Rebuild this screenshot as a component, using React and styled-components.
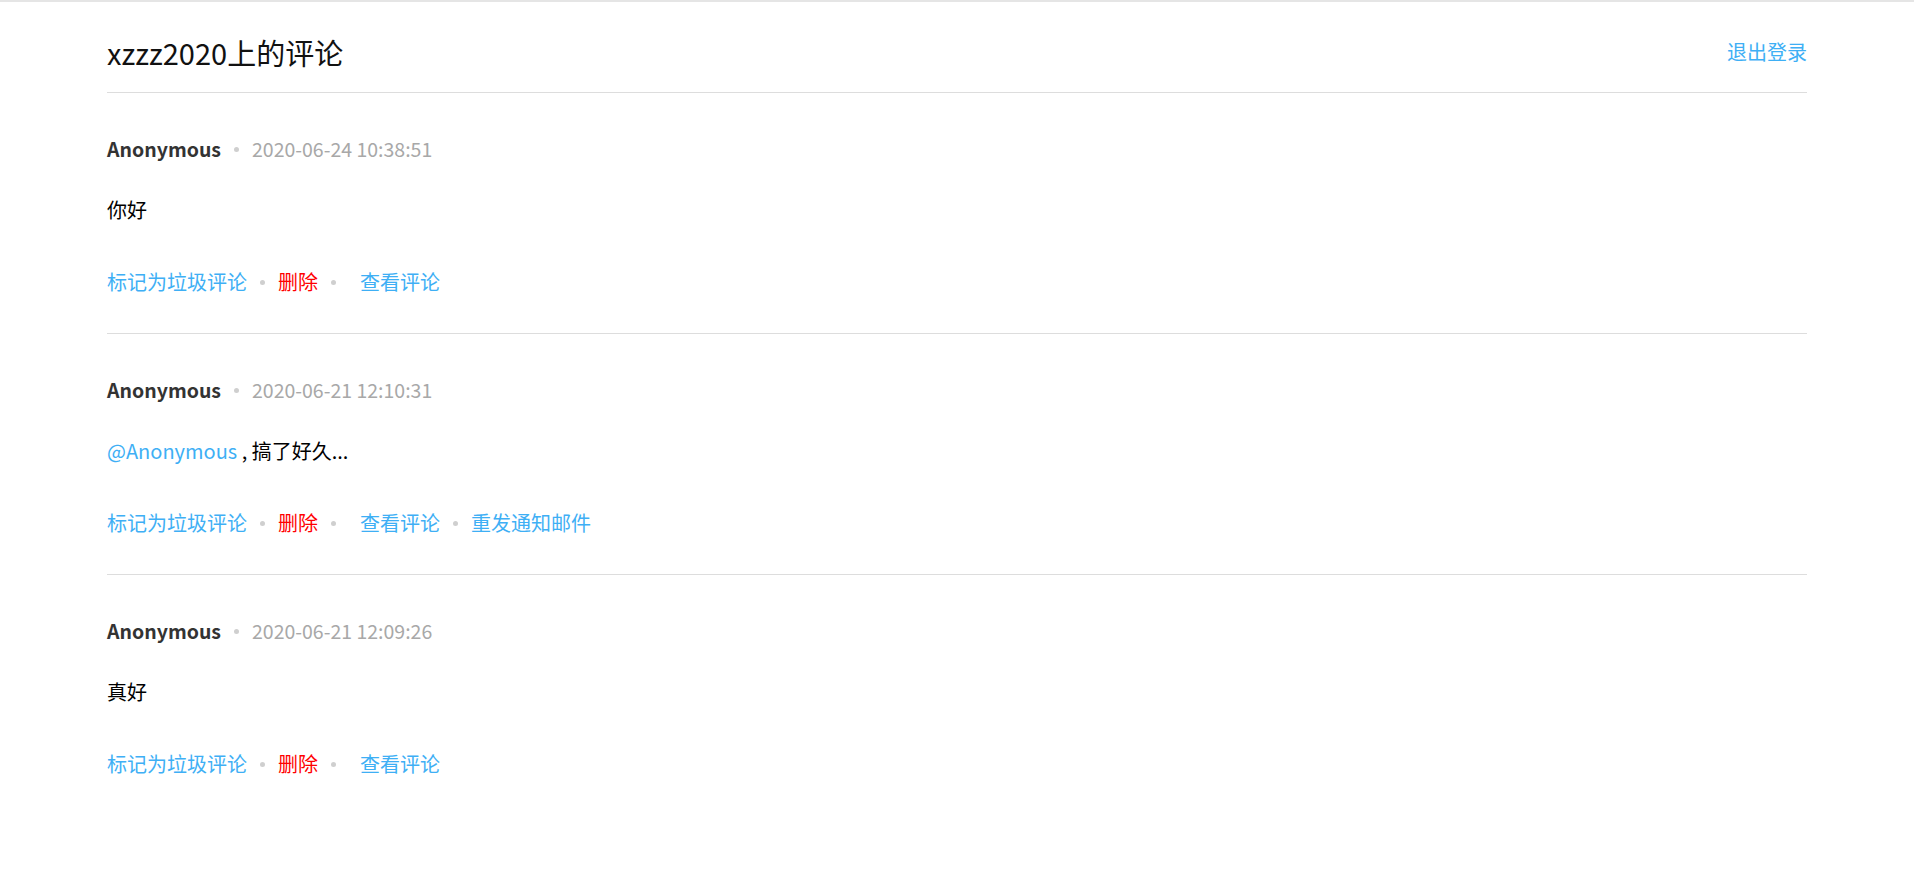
import React from "react";
import styled, { createGlobalStyle } from "styled-components";

const GlobalStyle = createGlobalStyle`
  html, body {
    margin: 0;
    padding: 0;
    background: #fff;
  }
  body {
    font-family: "Noto Sans CJK SC", "Open Sans", sans-serif;
    color: #000;
    border-top: 2px solid #e5e5e5;
  }
`;

const Page = styled.div`
  max-width: 1700px;
  margin: 0 auto;
`;

const Header = styled.header`
  display: flex;
  align-items: center;
  justify-content: space-between;
  padding: 30px 0 20px;
  border-bottom: 1px solid #ddd;
`;

const Title = styled.h1`
  margin: 0;
  font-size: 29px;
  line-height: 40px;
  font-weight: 400;
  color: #111;
`;

const Link = styled.a`
  color: ${(p) => (p.$danger ? "#f00" : "#3eaff5")};
  text-decoration: none;
  cursor: pointer;
`;

const Logout = styled(Link)`
  font-size: 20px;
  line-height: 40px;
`;

const Item = styled.div`
  padding: 40px 0 37px;
  border-bottom: ${(p) => (p.$last ? "none" : "1px solid #ddd")};
`;

const Meta = styled.div`
  display: flex;
  align-items: center;
  height: 30px;
  font-size: 19.5px;
`;

const Author = styled.span`
  font-weight: 700;
  color: #333;
`;

const Time = styled.span`
  color: #a8a8a8;
`;

const Dot = styled.span`
  width: 5px;
  height: 5px;
  border-radius: 50%;
  background: #cfcfcf;
  margin: 2px ${(p) => (p.$wide ? "24px" : "13px")} 0 13px;
  flex: none;
`;

const Content = styled.div`
  margin-top: 32px;
  font-size: 20px;
  line-height: 30px;
  color: #000;
`;

const Actions = styled.div`
  display: flex;
  align-items: center;
  margin-top: 41px;
  height: 30px;
  font-size: 20px;
`;

const comments = [
  {
    time: "2020-06-24 10:38:51",
    body: "你好",
  },
  {
    time: "2020-06-21 12:10:31",
    at: "@Anonymous",
    body: " , 搞了好久...",
    resend: true,
  },
  {
    time: "2020-06-21 12:09:26",
    body: "真好",
  },
];

const Comment = ({ c, last }) => (
  <Item $last={last}>
    <Meta>
      <Author>Anonymous</Author>
      <Dot />
      <Time>{c.time}</Time>
    </Meta>
    <Content>
      {c.at && <Link>{c.at}</Link>}
      {c.body}
    </Content>
    <Actions>
      <Link>标记为垃圾评论</Link>
      <Dot />
      <Link $danger>删除</Link>
      <Dot $wide />
      <Link>查看评论</Link>
      {c.resend && (
        <>
          <Dot />
          <Link>重发通知邮件</Link>
        </>
      )}
    </Actions>
  </Item>
);

export default function App() {
  return (
    <Page>
      <GlobalStyle />
      <Header>
        <Title>xzzz2020上的评论</Title>
        <Logout>退出登录</Logout>
      </Header>
      {comments.map((c, i) => (
        <Comment key={i} c={c} last={i === comments.length - 1} />
      ))}
    </Page>
  );
}
